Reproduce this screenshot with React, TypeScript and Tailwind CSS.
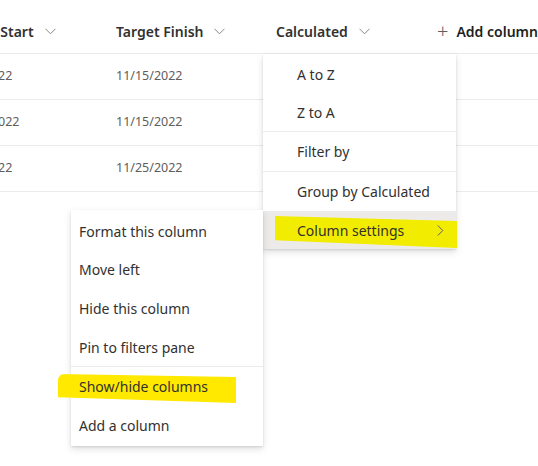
import React from 'react';

const font = { fontFamily: '"Noto Sans", "Open Sans", Arial, sans-serif' };

const Chevron: React.FC = () => (
  <svg width="11" height="7" viewBox="0 0 11 7" className="ml-[11px] text-[#8a8886]">
    <path d="M0.5 0.8 L5.5 5.8 L10.5 0.8" fill="none" stroke="currentColor" strokeWidth="1" />
  </svg>
);

const columns = [
  { title: 'Target Start', width: 'w-[163px]' },
  { title: 'Target Finish', width: 'w-[160px]' },
  { title: 'Calculated', width: 'w-[160px]' },
];

const rows = [
  ['11/1/2022', '11/15/2022'],
  ['11/10/2022', '11/15/2022'],
  ['11/1/2022', '11/25/2022'],
];

const App: React.FC = () => {
  return (
    <div className="relative w-[538px] h-[466px] bg-white overflow-hidden" style={font}>
      {/* list view */}
      <div className="ml-[-47px] w-[700px] pt-[9px]">
        <div className="flex h-[45px] items-center border-b border-[#edebe9] text-[14px] font-semibold text-[#323130]">
          {columns.map((c) => (
            <div key={c.title} className={`${c.width} flex items-center`}>
              <span>{c.title}</span>
              <Chevron />
            </div>
          ))}
          <div className="flex items-center text-[#201f1e]">
            <span className="text-[20px] font-light text-[#605e5c] leading-none mr-[8px] ml-[1px]">+</span>
            <span>Add column</span>
          </div>
        </div>
        {rows.map((r, i) => (
          <div key={i} className="flex h-[46px] items-center border-b border-[#edebe9] text-[12.5px] text-[#605e5c]">
            <div className="w-[163px]">{r[0]}</div>
            <div className="w-[160px]">{r[1]}</div>
            <div className="w-[160px]"></div>
          </div>
        ))}
      </div>

      {/* column header menu */}
      <div className="absolute left-[263px] top-[54px] w-[193px] bg-white pt-px text-[14px] text-[#323130] shadow-[0_3.2px_7.2px_rgba(0,0,0,0.13),0_0.6px_1.8px_rgba(0,0,0,0.11)]">
        <div className="h-[38px] flex items-center pl-[34px]">A to Z</div>
        <div className="h-[38px] flex items-center pl-[34px]">Z to A</div>
        <div className="h-px bg-[#edebe9]" />
        <div className="h-[39px] flex items-center pl-[34px]">Filter by</div>
        <div className="h-px bg-[#edebe9]" />
        <div className="h-[39px] flex items-center pl-[34px]">Group by Calculated</div>
        <div className="relative h-[38px] flex items-center pl-[34px] bg-[#edebe9]">
          <span className="absolute left-[12px] top-[5px] w-[182px] h-[32px] bg-[#f2ec00] [clip-path:polygon(0_0,100%_16%,100%_100%,0_76%)]" />
          <span className="relative">Column settings</span>
          <svg width="7" height="11" viewBox="0 0 7 11" className="absolute right-[12px] top-[14px] text-[#605e5c]">
            <path d="M0.8 0.5 L5.8 5.5 L0.8 10.5" fill="none" stroke="currentColor" strokeWidth="1" />
          </svg>
        </div>
      </div>

      {/* column settings submenu */}
      <div className="absolute left-[71px] top-[210px] w-[192px] bg-white py-[2px] text-[14px] text-[#323130] shadow-[0_3.2px_7.2px_rgba(0,0,0,0.13),0_0.6px_1.8px_rgba(0,0,0,0.11)]">
        <div className="h-[38px] flex items-center pl-2">Format this column</div>
        <div className="h-[39px] flex items-center pl-2">Move left</div>
        <div className="h-[39px] flex items-center pl-2">Hide this column</div>
        <div className="h-[38px] flex items-center pl-2">Pin to filters pane</div>
        <div className="h-px bg-[#edebe9]" />
        <div className="relative h-[39px] flex items-center pl-2">
          <span className="absolute left-[-13px] top-[7px] w-[178px] h-[29px] bg-[#ffe900] rounded-l-[6px] [clip-path:polygon(0_0,100%_10%,100%_100%,0_80%)]" />
          <span className="relative">Show/hide columns</span>
        </div>
        <div className="h-[38px] flex items-center pl-2">Add a column</div>
      </div>
    </div>
  );
};

export default App;
